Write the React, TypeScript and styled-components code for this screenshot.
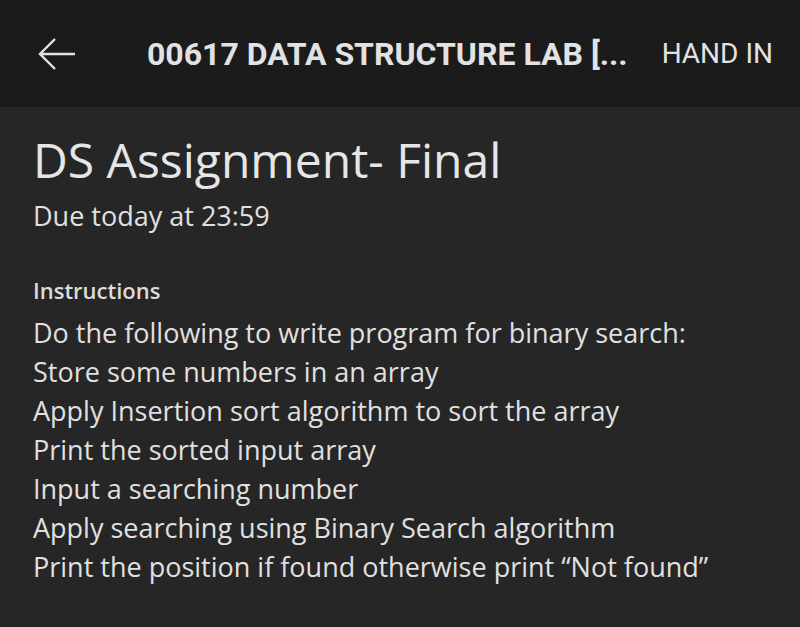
import React from "react";
import styled, { createGlobalStyle } from "styled-components";

const GlobalStyle = createGlobalStyle`
  html, body {
    margin: 0;
    padding: 0;
    background: #262626;
  }
  body {
    font-family: "Open Sans", "Noto Sans", sans-serif;
    color: #e4e4e4;
  }
`;

const Page = styled.div`
  width: 800px;
  height: 627px;
  display: flex;
  flex-direction: column;
  background: #262626;
  overflow: hidden;
`;

const Header = styled.header`
  height: 107px;
  flex-shrink: 0;
  display: flex;
  align-items: center;
  padding: 0 27px 0 38px;
  background: #1b1b1b;
`;

const BackButton = styled.button`
  width: 38px;
  height: 34px;
  padding: 0;
  border: none;
  background: transparent;
  display: flex;
  align-items: center;
  justify-content: center;
  cursor: pointer;
`;

const CourseTitle = styled.h1`
  flex: 1;
  margin: 0 0 0 71px;
  font-family: Roboto, "Liberation Sans", sans-serif;
  font-weight: 700;
  font-size: 32px;
  line-height: 40px;
  color: #e2e2e2;
  white-space: nowrap;
  overflow: hidden;
`;

const HandIn = styled.button`
  border: none;
  background: transparent;
  padding: 0;
  font-family: Roboto, "Liberation Sans", sans-serif;
  font-size: 28px;
  line-height: 40px;
  font-weight: 400;
  color: #e2e2e2;
  cursor: pointer;
`;

const Content = styled.main`
  padding: 22px 33px 0;
  display: flex;
  flex-direction: column;
`;

const Title = styled.h2`
  margin: 0;
  font-size: 48px;
  font-weight: 400;
  line-height: 61px;
  color: #e6e6e6;
`;

const Due = styled.div`
  margin-top: 6px;
  font-size: 27px;
  line-height: 40px;
  color: #e0e0e0;
`;

const SectionLabel = styled.div`
  margin: 39px 0 8px;
  font-size: 22px;
  font-weight: 600;
  line-height: 30px;
  color: #dcdcdc;
`;

const Line = styled.div`
  font-size: 27px;
  line-height: 39px;
  color: #e0e0e0;
`;

const steps = [
  "Do the following to write program for binary search:",
  "Store some numbers in an array",
  "Apply Insertion sort algorithm to sort the array",
  "Print the sorted input array",
  "Input a searching number",
  "Apply searching using Binary Search algorithm",
  "Print the position if found otherwise print \u201cNot found\u201d",
];

const App: React.FC = () => {
  return (
    <>
      <GlobalStyle />
      <Page>
        <Header>
          <BackButton aria-label="Back">
            <svg width="38" height="34" viewBox="0 0 38 34" fill="none">
              <path
                d="M37 17H2M17 2L2 17l15 15"
                stroke="#e2e2e2"
                strokeWidth="2.4"
              />
            </svg>
          </BackButton>
          <CourseTitle>00617 DATA STRUCTURE LAB [...</CourseTitle>
          <HandIn>HAND IN</HandIn>
        </Header>
        <Content>
          <Title>DS Assignment- Final</Title>
          <Due>Due today at 23:59</Due>
          <SectionLabel>Instructions</SectionLabel>
          {steps.map((s) => (
            <Line key={s}>{s}</Line>
          ))}
        </Content>
      </Page>
    </>
  );
};

export default App;
